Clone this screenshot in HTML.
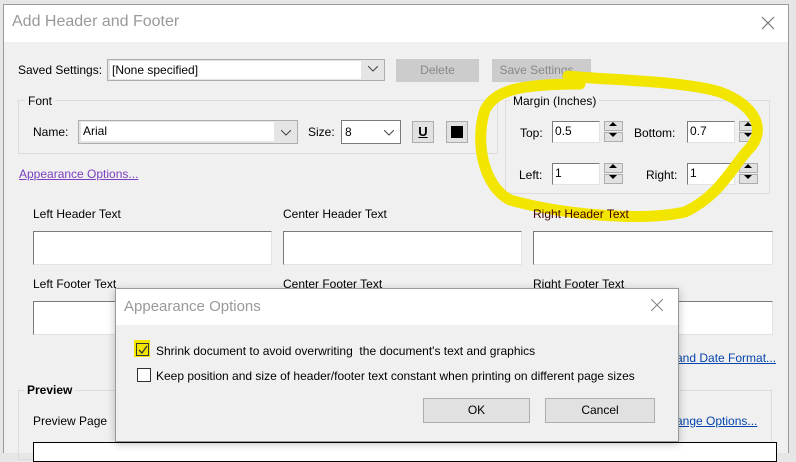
<!DOCTYPE html>
<html><head><meta charset="utf-8"><style>
*{box-sizing:border-box;margin:0;padding:0}
body{width:796px;height:453px;background:#e6e6e6;position:relative;overflow:hidden;font-family:"Liberation Sans",sans-serif;font-size:12px;color:#000}
.a{position:absolute}
.in{position:absolute;background:#fff;border:1px solid #7a7a7a;border-right-color:#e3e3e3;border-bottom-color:#e3e3e3;}
.btn{position:absolute;background:#e1e1e1;border:1px solid #adadad;text-align:center}
.grp{position:absolute;border:1px solid #dcdcdc}
.lbl{position:absolute;white-space:nowrap}
.spin{position:absolute;width:19px;height:21px}
.spin div{height:10px;border:1px solid #adadad;background:#e1e1e1;margin-bottom:1px;position:relative}
</style></head><body>
<div class="a" style="left:3px;top:4px;width:786px;height:449px;background:#f0f0f0;border:1px solid #9a9a9a;border-bottom:none"></div>
<div class="a" style="left:4px;top:5px;width:784px;height:37px;background:#fff"></div>
<div class="lbl" style="left:12px;top:13px;font-size:16px;color:#999">Add Header and Footer</div>
<svg class="a" style="left:761px;top:16px" width="14" height="14"><path d="M1 1L13 13M13 1L1 13" stroke="#777" stroke-width="1.2"/></svg>

<div class="lbl" style="left:18px;top:63px">Saved Settings:</div>
<div class="a" style="left:107px;top:59px;width:278px;height:22px;background:#e5e5e5;border:1px solid #adadad"></div>
<div class="a" style="left:110px;top:61px;width:251px;height:18px;background:#fff"></div>
<div class="lbl" style="left:112px;top:63px">[None specified]</div>
<svg class="a" style="left:368px;top:66px" width="10" height="6"><path d="M0 0L5 5L10 0" stroke="#444" fill="none"/></svg>
<div class="btn" style="left:396px;top:59px;width:83px;height:23px;background:#ccc;border-color:#ccc;color:#888;line-height:21px">Delete</div>
<div class="btn" style="left:492px;top:59px;width:99px;height:23px;background:#ccc;border-color:#ccc;color:#888;line-height:21px">Save Settings...</div>

<div class="grp" style="left:18px;top:100px;width:480px;height:54px"></div>
<div class="lbl" style="left:25px;top:94px;background:#f0f0f0;padding:0 3px">Font</div>
<div class="lbl" style="left:33px;top:125px">Name:</div>
<div class="a" style="left:78px;top:120px;width:220px;height:24px;background:#e5e5e5;border:1px solid #adadad"></div>
<div class="a" style="left:81px;top:122px;width:193px;height:19px;background:#fff"></div>
<div class="lbl" style="left:83px;top:124px">Arial</div>
<svg class="a" style="left:281px;top:130px" width="10" height="6"><path d="M0 0L5 5L10 0" stroke="#444" fill="none"/></svg>
<div class="lbl" style="left:308px;top:125px">Size:</div>
<div class="a" style="left:341px;top:120px;width:60px;height:24px;background:#fff;border:1px solid #7a7a7a"></div>
<div class="lbl" style="left:345px;top:125px">8</div>
<svg class="a" style="left:384px;top:130px" width="10" height="6"><path d="M0 0L5 5L10 0" stroke="#444" fill="none"/></svg>
<div class="btn" style="left:412px;top:121px;width:22px;height:22px;font-weight:bold;text-decoration:underline;font-size:13px;line-height:20px">U</div>
<div class="btn" style="left:446px;top:121px;width:22px;height:22px"><div style="width:12px;height:12px;background:#000;margin:4px auto"></div></div>

<div class="lbl" style="left:19px;top:167px;color:#7a3fbf;text-decoration:underline">Appearance Options...</div>

<div class="grp" style="left:505px;top:100px;width:265px;height:94px"></div>
<div class="lbl" style="left:510px;top:94px;background:#f0f0f0;padding:0 3px">Margin (Inches)</div>
<div class="lbl" style="left:520px;top:126px">Top:</div>
<div class="in" style="left:552px;top:121px;width:48px;height:22px;padding:2px 2px">0.5</div>
<div class="spin" style="left:604px;top:121px"><div></div><div></div></div>
<div class="lbl" style="left:634px;top:126px">Bottom:</div>
<div class="in" style="left:687px;top:121px;width:48px;height:22px;padding:2px 2px">0.7</div>
<div class="spin" style="left:739px;top:121px"><div></div><div></div></div>
<div class="lbl" style="left:519px;top:168px">Left:</div>
<div class="in" style="left:552px;top:163px;width:48px;height:22px;padding:2px 2px">1</div>
<div class="spin" style="left:604px;top:163px"><div></div><div></div></div>
<div class="lbl" style="left:646px;top:168px">Right:</div>
<div class="in" style="left:687px;top:163px;width:48px;height:22px;padding:2px 2px">1</div>
<div class="spin" style="left:739px;top:163px"><div></div><div></div></div>
<svg class="a" style="left:600px;top:120px" width="160" height="70">
<g fill="#000"><path d="M9 6L13 2L17 6Z"/><path d="M9 13L13 17L17 13Z"/><path d="M9 48L13 44L17 48Z"/><path d="M9 55L13 59L17 55Z"/>
<path d="M144 6L148 2L152 6Z"/><path d="M144 13L148 17L152 13Z"/><path d="M144 48L148 44L152 48Z"/><path d="M144 55L148 59L152 55Z"/></g></svg>

<div class="lbl" style="left:33px;top:207px">Left Header Text</div>
<div class="lbl" style="left:283px;top:207px">Center Header Text</div>
<div class="in" style="left:33px;top:231px;width:239px;height:34px"></div>
<div class="in" style="left:283px;top:231px;width:239px;height:34px"></div>
<div class="in" style="left:533px;top:231px;width:240px;height:34px"></div>
<div class="lbl" style="left:33px;top:277px">Left Footer Text</div>
<div class="lbl" style="left:283px;top:277px">Center Footer Text</div>
<div class="lbl" style="left:533px;top:277px">Right Footer Text</div>
<div class="in" style="left:33px;top:301px;width:239px;height:34px"></div>
<div class="in" style="left:533px;top:301px;width:240px;height:34px"></div>
<div class="lbl" style="left:676px;top:351px;color:#0645ad;text-decoration:underline">and Date Format...</div>
<div class="grp" style="left:18px;top:390px;width:754px;height:70px"></div>
<div class="lbl" style="left:24px;top:383px;background:#f0f0f0;padding:0 3px;font-weight:bold">Preview</div>
<div class="lbl" style="left:33px;top:414px">Preview Page</div>
<div class="lbl" style="left:676px;top:414px;color:#0645ad;text-decoration:underline">ange Options...</div>
<div class="a" style="left:33px;top:442px;width:744px;height:20px;background:#fff;border:1px solid #000"></div>

<svg class="a" style="left:0;top:0" width="796" height="453"><path d="M568 76C600 80 680 80 720 92C755 105 768 130 748 150C730 170 720 195 685 212C640 222 560 214 510 200C482 185 475 140 485 110C495 90 520 84 580 84" stroke="#f2e600" stroke-width="11" fill="none" stroke-linecap="round"/></svg>
<div class="lbl" style="left:533px;top:207px;color:#400">Right Header Text</div>

<div class="a" style="left:115px;top:288px;width:564px;height:154px;background:#f0f0f0;border:1px solid #9a9a9a;box-shadow:0 2px 8px rgba(0,0,0,.25)"></div>
<div class="a" style="left:116px;top:289px;width:562px;height:36px;background:#fff"></div>
<div class="lbl" style="left:124px;top:298px;font-size:15px;color:#999">Appearance Options</div>
<svg class="a" style="left:651px;top:299px" width="12" height="12"><path d="M0 0L12 12M12 0L0 12" stroke="#888" stroke-width="1.1"/></svg>
<div class="a" style="left:134px;top:340px;width:16px;height:17px;background:#f2e600"></div>
<div class="a" style="left:136px;top:343px;width:13px;height:13px;border:1px solid #333;background:#f2e600"></div>
<svg class="a" style="left:137px;top:344px" width="12" height="11"><path d="M2 6L5 9L10 2" stroke="#333" stroke-width="1.3" fill="none"/></svg>
<div class="lbl" style="left:156px;top:344px">Shrink document to avoid overwriting&nbsp; the document's text and graphics</div>
<div class="a" style="left:137px;top:368px;width:14px;height:14px;border:1px solid #333;background:#fff"></div>
<div class="lbl" style="left:156px;top:369px">Keep position and size of header/footer text constant when printing on different page sizes</div>
<div class="btn" style="left:423px;top:398px;width:107px;height:25px;line-height:23px">OK</div>
<div class="btn" style="left:545px;top:398px;width:110px;height:25px;line-height:23px">Cancel</div>
</body></html>
